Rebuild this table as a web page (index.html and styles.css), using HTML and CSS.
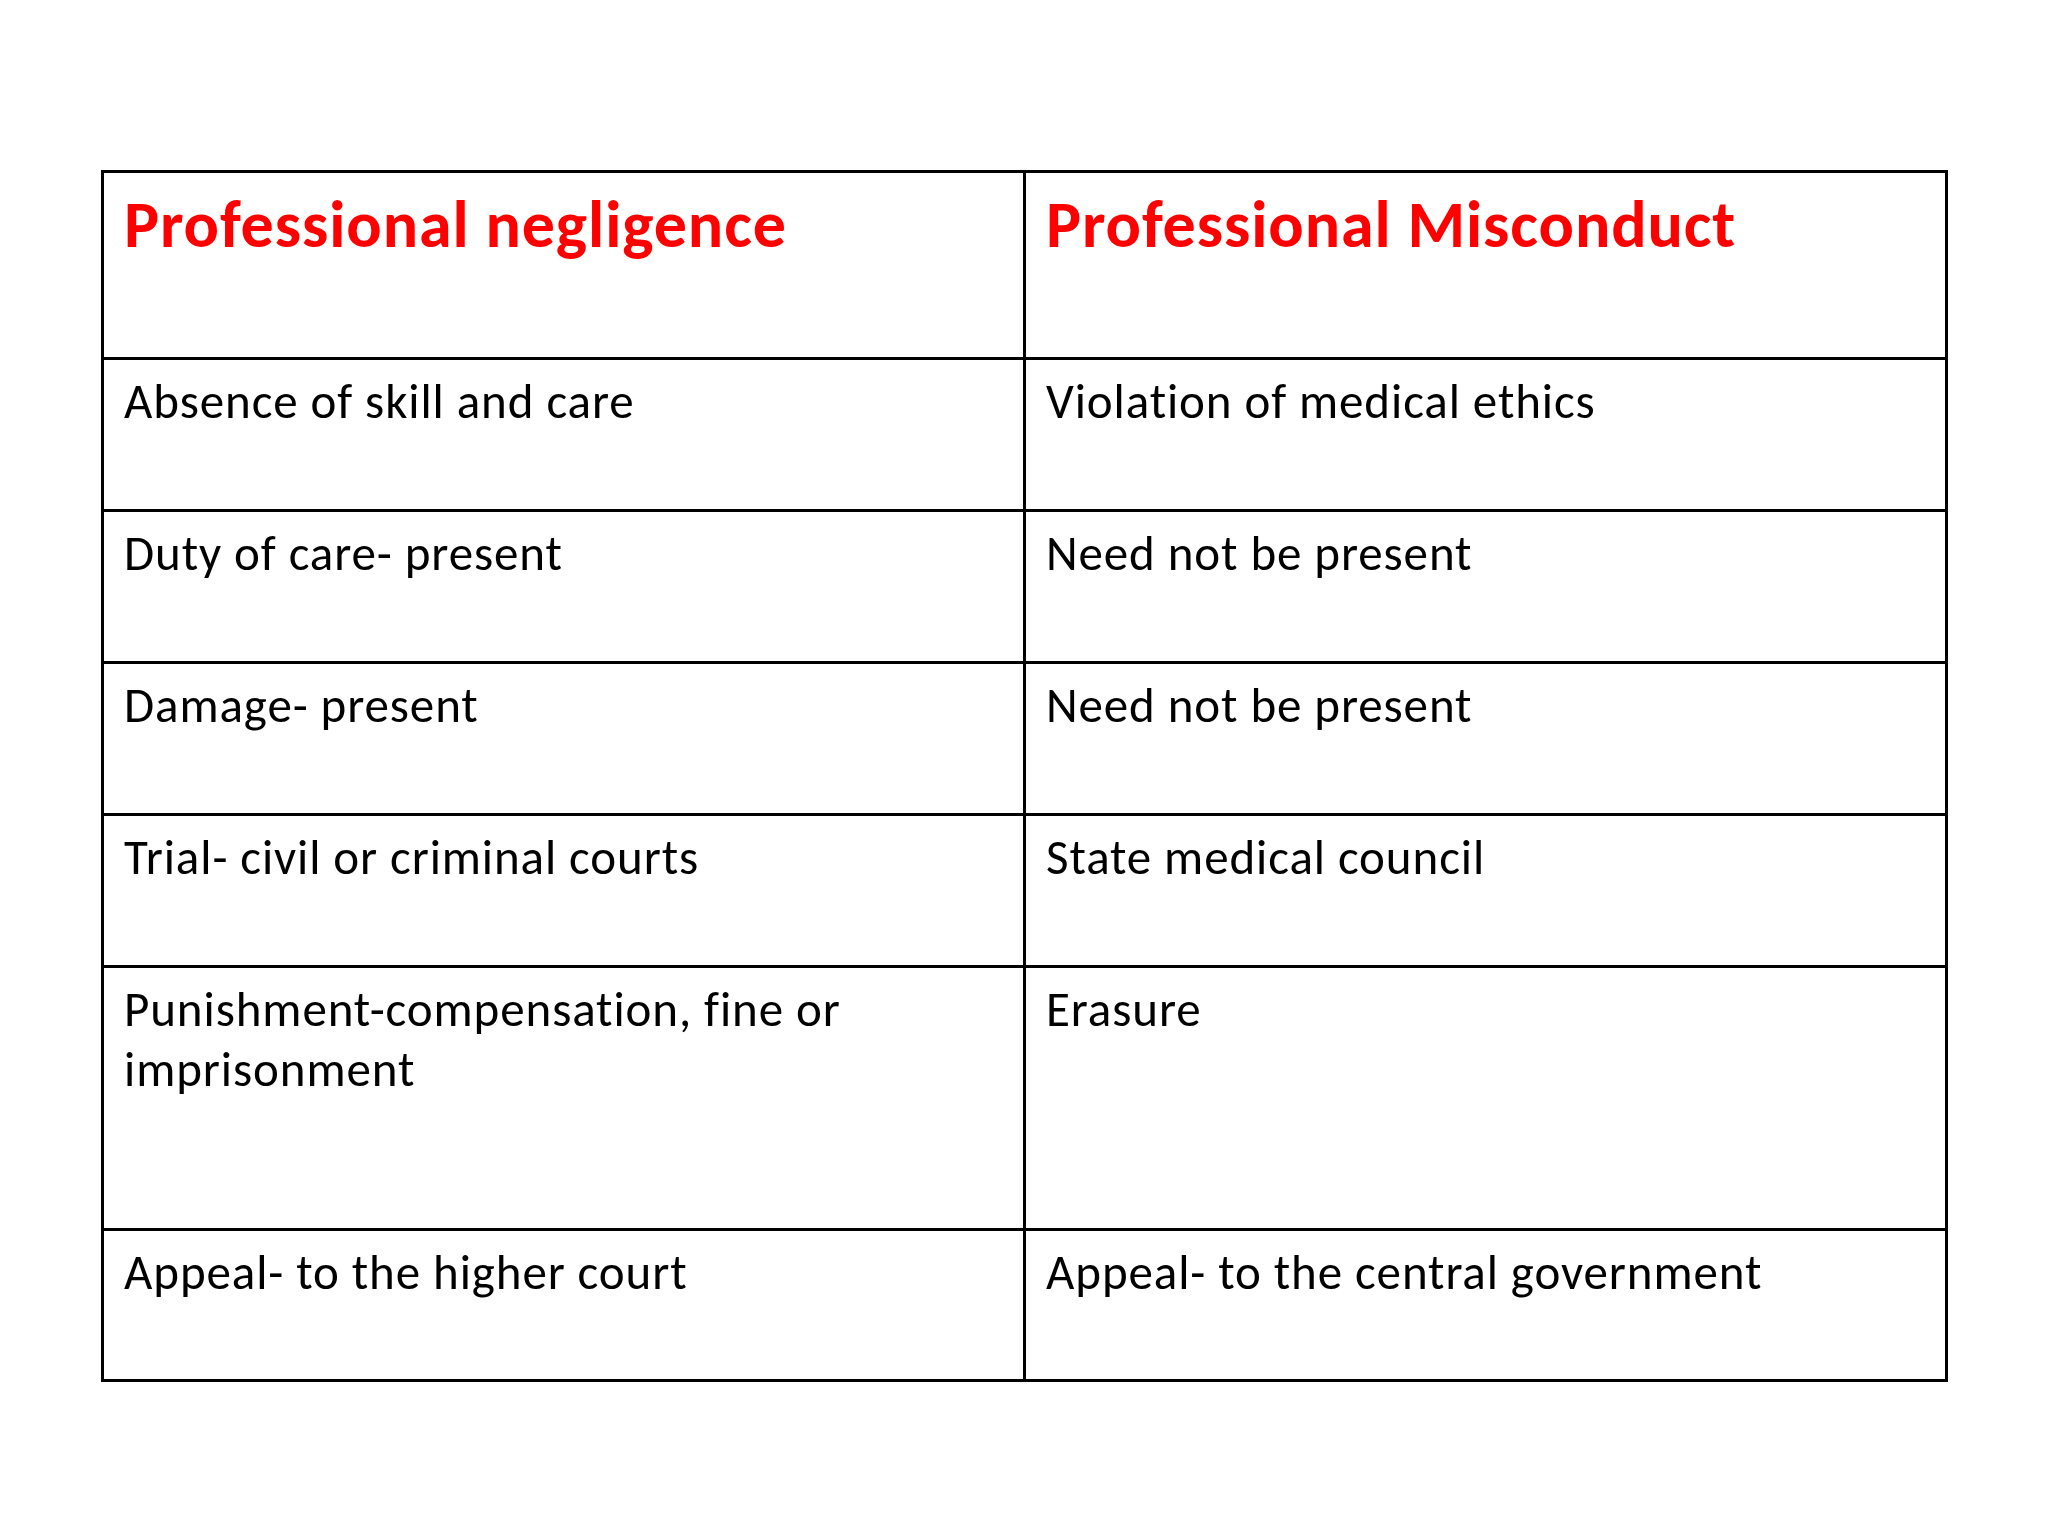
FILE: index.html
```html
<!DOCTYPE html>
<html lang="en">
<head>
<meta charset="utf-8">
<title>Professional negligence vs Professional Misconduct</title>
<link rel="stylesheet" href="styles.css">
</head>
<body>
<main class="slide">
  <div class="table">
    <div class="cell head">Professional negligence</div>
    <div class="cell head">Professional Misconduct</div>
    <div class="cell">Absence of skill and care</div>
    <div class="cell">Violation of medical ethics</div>
    <div class="cell">Duty of care- present</div>
    <div class="cell">Need not be present</div>
    <div class="cell">Damage- present</div>
    <div class="cell">Need not be present</div>
    <div class="cell">Trial- civil or criminal courts</div>
    <div class="cell">State medical council</div>
    <div class="cell">Punishment-compensation, fine or imprisonment</div>
    <div class="cell">Erasure</div>
    <div class="cell">Appeal- to the higher court</div>
    <div class="cell">Appeal- to the central government</div>
  </div>
</main>
</body>
</html>
```
FILE: styles.css
```css
html, body {
  margin: 0;
  padding: 0;
  background: #ffffff;
}
.slide {
  width: 2048px;
  height: 1536px;
  box-sizing: border-box;
  padding: 170px 0 0 101px;
  font-family: Carlito, Lato, "Liberation Sans", sans-serif;
  color: #000000;
}
.table {
  display: grid;
  grid-template-columns: 922px 922px;
  grid-template-rows: 187px 152px 152px 152px 152px 263px 151px;
  width: 1847px;
  box-sizing: border-box;
  border-top: 3px solid #000;
  border-left: 3px solid #000;
}
.cell {
  box-sizing: border-box;
  border-right: 3px solid #000;
  border-bottom: 3px solid #000;
  padding: 11px 40px 0 20px;
  font-size: 49px;
  line-height: 60px;
  letter-spacing: 0.9px;
}
.head {
  color: #ff0000;
  font-weight: bold;
  font-size: 66px;
  line-height: 80px;
  letter-spacing: 0.9px;
  padding-top: 12px;
}
```
